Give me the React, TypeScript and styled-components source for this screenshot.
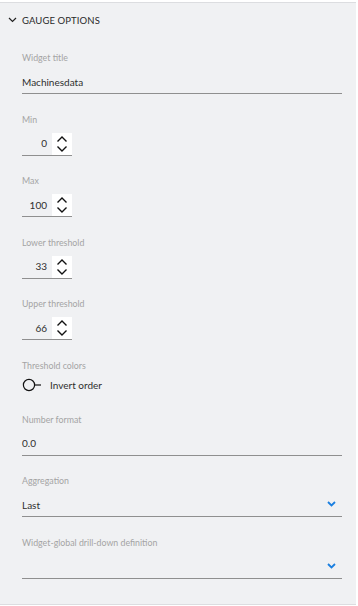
import React from "react";
import styled, { createGlobalStyle } from "styled-components";

const Global = createGlobalStyle`
  html, body { margin: 0; padding: 0; background: #ffffff; }
  body { font-family: Lato, "Noto Sans", "Liberation Sans", sans-serif; }
  * { box-sizing: border-box; }
`;

const Panel = styled.div`
  margin-top: 2px;
  width: 356px;
  height: 603px;
  background: #f0f1f3;
  border-top: 1px solid #dcdde0;
  border-bottom: 1px solid #dcdde0;
  display: flex;
  flex-direction: column;
`;

const Header = styled.div`
  height: 34px;
  display: flex;
  align-items: center;
  gap: 5px;
  padding-left: 8px;
  font-size: 9.5px;
  color: #2a2a2a;
  letter-spacing: 0.1px;
  text-transform: uppercase;
`;

const Fields = styled.div`
  display: flex;
  flex-direction: column;
  padding: 15px 14px 0 22px;
`;

const Field = styled.div<{ $gapAfter?: number }>`
  display: flex;
  flex-direction: column;
  margin-bottom: ${(p) => (p.$gapAfter ?? 19.5)}px;
`;

const Label = styled.div`
  font-size: 8.8px;
  font-weight: 400;
  line-height: 12px;
  height: 12px;
  color: #a4a4a4;
  margin-bottom: 6px;
  white-space: nowrap;
`;

const TextInput = styled.div`
  height: 24px;
  border-bottom: 1px solid #8f8f8f;
  display: flex;
  align-items: center;
  justify-content: space-between;
  font-size: 10px;
  color: #2e2e2e;
`;

const NumberBox = styled.div`
  width: 50px;
  height: 24px;
  border-bottom: 1px solid #8f8f8f;
  display: flex;
  align-items: stretch;
`;

const NumValue = styled.div`
  flex: 1;
  display: flex;
  align-items: center;
  justify-content: flex-end;
  padding-right: 5px;
  font-size: 10px;
  color: #2e2e2e;
`;

const Spinner = styled.div`
  width: 20px;
  height: 22px;
  margin-top: 1px;
  background: #ffffff;
  display: flex;
  flex-direction: column;
  align-items: center;
  justify-content: center;
  gap: 2px;
`;

const ToggleRow = styled.div`
  height: 14px;
  display: flex;
  align-items: center;
  gap: 8px;
  font-size: 10px;
  color: #2e2e2e;
`;

const Chevron = styled.svg`
  margin-right: 6px;
  margin-bottom: 1px;
`;

const Up = () => (
  <svg width="12" height="8" viewBox="0 0 12 8">
    <path d="M1.5 6.5 L6 2 L10.5 6.5" fill="none" stroke="#111" strokeWidth="1.4" />
  </svg>
);
const Down = () => (
  <svg width="12" height="8" viewBox="0 0 12 8">
    <path d="M1.5 1.5 L6 6 L10.5 1.5" fill="none" stroke="#111" strokeWidth="1.4" />
  </svg>
);

const BlueChevron = () => (
  <Chevron width="9" height="6" viewBox="0 0 9 6">
    <path d="M1 1 L4.5 4.5 L8 1" fill="none" stroke="#1a7fe0" strokeWidth="1.8" />
  </Chevron>
);

const NumberField = ({ label, value }: { label: string; value: string }) => (
  <Field>
    <Label>{label}</Label>
    <NumberBox>
      <NumValue>{value}</NumValue>
      <Spinner>
        <Up />
        <Down />
      </Spinner>
    </NumberBox>
  </Field>
);

export default function App() {
  return (
    <>
      <Global />
      <Panel>
        <Header>
          <svg width="9" height="6" viewBox="0 0 9 6">
            <path d="M1 1 L4.5 4.5 L8 1" fill="none" stroke="#222" strokeWidth="1.2" />
          </svg>
          <span>Gauge options</span>
        </Header>
        <Fields>
          <Field>
            <Label>Widget title</Label>
            <TextInput>Machinesdata</TextInput>
          </Field>
          <NumberField label="Min" value="0" />
          <NumberField label="Max" value="100" />
          <NumberField label="Lower threshold" value="33" />
          <NumberField label="Upper threshold" value="66" />
          <Field $gapAfter={22}>
            <Label>Threshold colors</Label>
            <ToggleRow>
              <svg width="20" height="14" viewBox="0 0 20 14">
                <circle cx="7" cy="7" r="5.6" fill="none" stroke="#111" strokeWidth="1.2" />
                <path d="M12.6 7 L19 7" stroke="#111" strokeWidth="1.2" />
              </svg>
              <span>Invert order</span>
            </ToggleRow>
          </Field>
          <Field>
            <Label>Number format</Label>
            <TextInput>0.0</TextInput>
          </Field>
          <Field>
            <Label>Aggregation</Label>
            <TextInput>
              <span>Last</span>
              <BlueChevron />
            </TextInput>
          </Field>
          <Field>
            <Label>Widget-global drill-down definition</Label>
            <TextInput>
              <span />
              <BlueChevron />
            </TextInput>
          </Field>
        </Fields>
      </Panel>
    </>
  );
}
